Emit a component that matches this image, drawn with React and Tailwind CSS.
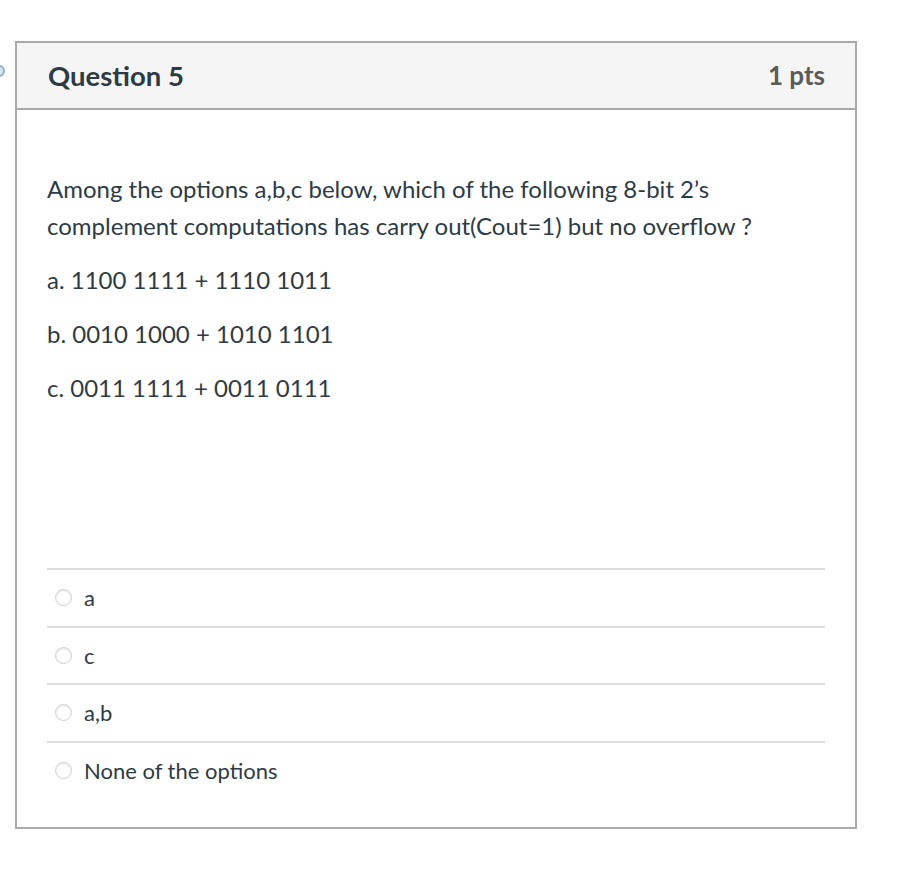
export default function App() {
  return (
    <div className="relative min-h-[884px] w-[910px] bg-white" style={{ fontFamily: "Lato, 'Noto Sans', sans-serif" }}>
      <div className="absolute left-[-7px] top-[65px] h-[12px] w-[12px] rounded-full border-2 border-[#8fb0cc] bg-[#dbe6ef]" />
      <div className="pt-[41px] pl-[15px]">
        <div className="w-[842px] border-2 border-[#aaaaaa] bg-white">
          <div className="flex h-[67px] items-center justify-between border-b-2 border-[#aaaaaa] bg-[#f5f5f5] pl-[31px] pr-[30px]">
            <h2 className="text-[27.5px] font-bold text-[#2d3b45]">Question 5</h2>
            <div className="text-[26px] font-bold text-[#5b5b5b]">1 pts</div>
          </div>
          <div className="px-[30px] pt-[60px] pb-[29px] text-[#2d3b45]">
            <div className="text-[24px] leading-[37px]">
              <p>Among the options a,b,c below, which of the following 8-bit 2’s complement computations has carry out(Cout=1) but no overflow ?</p>
              <p className="mt-[17px]">a. 1100 1111 + 1110 1011</p>
              <p className="mt-[17px]">b. 0010 1000 + 1010 1101</p>
              <p className="mt-[17px]">c. 0011 1111 + 0011 0111</p>
            </div>
            <div className="mt-[162px]">
              {["a", "c", "a,b", "None of the options"].map((t) => (
                <div key={t} className="flex h-[57.5px] items-center border-t-2 border-[#dddddd]">
                  <span className="ml-[8px] mr-[12px] h-[17px] w-[17px] rounded-full border border-[#cfcfcf] bg-white shadow-[inset_0_1px_2px_rgba(0,0,0,0.12)]" />
                  <span className="text-[22px] text-[#2d3b45]">{t}</span>
                </div>
              ))}
            </div>
          </div>
        </div>
      </div>
    </div>
  );
}
